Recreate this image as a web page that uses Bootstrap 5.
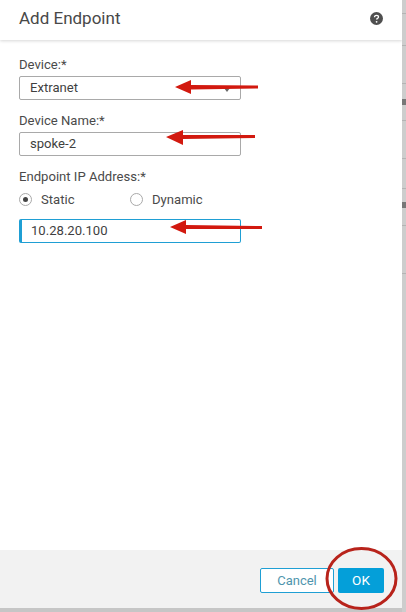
<!DOCTYPE html>
<html>
<head>
  <meta charset="UTF-8">
  <title>Add Endpoint</title>
  <link href="https://cdn.jsdelivr.net/npm/bootstrap@5.3.3/dist/css/bootstrap.min.css" rel="stylesheet">
  <script src="https://cdn.jsdelivr.net/npm/bootstrap@5.3.3/dist/js/bootstrap.bundle.min.js"></script>
  <style>
    html, body { height: 612px; overflow: hidden; }
    body { background: #fff; font-family: Roboto, "Liberation Sans", sans-serif; color: #4a4a4a; font-size: 13.1px; }
    .page-wrap { height: 612px; position: relative; }
    .dlg { width: 402px; height: 612px; background: #fff; }
    .side-strip { width: 4px; height: 612px; background: #cdcdcd; }
    .dlg-head { height: 40px; padding: 0 19px 4px; box-shadow: 0 1px 3px rgba(0,0,0,.16); }
    .dlg-title { font-size: 17px; color: #484848; font-weight: 400; margin: 0; }
    .dlg-body { padding: 16px 19px 0; }
    .fld-label { font-size: 13.1px; line-height: 17px; margin-bottom: 3px; color: #4a4a4a; }
    .fld-box { width: 222px; height: 24px; border: 1px solid #a9a9a9; border-radius: 2px; padding: 0 10px; line-height: 22px; font-size: 13.1px; color: #3f3f3f; background: #fff; position: relative; }
    .fld-caret { position: absolute; right: 10px; top: 11px; width: 0; height: 0; border-left: 3px solid transparent; border-right: 3px solid transparent; border-top: 4px solid #666; }
    .fld-focus { border-color: #1f9fd4; border-left: 3px solid #1f9fd4; padding-left: 9px; }
    .fld-gap { margin-bottom: 12px; }
    .radio-row { height: 24px; margin-bottom: 7px; }
    .radio-dot { width: 13px; height: 13px; border: 1px solid #a9a9a9; border-radius: 50%; background: #fff; display: inline-flex; align-items: center; justify-content: center; }
    .radio-dot i { width: 5px; height: 5px; background: #444; border-radius: 50%; }
    .radio-a { width: 111px; }
    .radio-opt { gap: 9px; }
    .dlg-foot { height: 58px; background: #f2f2f2; padding: 18px 18px 0 0; gap: 4px; }
    .foot-line { height: 4px; background: #c6c6c6; }
    .btn-cancel { width: 74px; height: 25px; padding: 0; border: 1px solid #1f9fd4; border-radius: 2px; background: #fff; color: #4f95ad; font-size: 13px; line-height: 22px; }
    .btn-ok { width: 46px; height: 25px; padding: 0; border: 0; border-radius: 2px; background: #049fd9; color: #fff; font-size: 13.5px; line-height: 25px; }
    .arrow-ov { position: absolute; left: 0; top: 0; pointer-events: none; }
  </style>
</head>
<body>
  <div class="page-wrap d-flex">
    <div class="dlg d-flex flex-column">
      <div class="dlg-head d-flex align-items-center justify-content-between">
        <h1 class="dlg-title">Add Endpoint</h1>
        <svg width="13" height="13" viewBox="0 0 13 13">
          <circle cx="6.5" cy="6.5" r="6.5" fill="#4f4f4f"/>
          <path d="M4.5 5.2c0-1.2.9-1.9 2-1.9s2 .7 2 1.7c0 1.4-1.9 1.3-1.9 2.6" fill="none" stroke="#fff" stroke-width="1.3"/>
          <circle cx="6.6" cy="9.8" r=".9" fill="#fff"/>
        </svg>
      </div>
      <div class="dlg-body flex-grow-1">
        <div class="fld-label">Device:*</div>
        <div class="fld-box fld-gap">Extranet<span class="fld-caret"></span></div>
        <div class="fld-label">Device Name:*</div>
        <div class="fld-box fld-gap">spoke-2</div>
        <div class="fld-label">Endpoint IP Address:*</div>
        <div class="radio-row d-flex align-items-center">
          <div class="radio-a radio-opt d-flex align-items-center"><span class="radio-dot"><i></i></span>Static</div>
          <div class="radio-opt d-flex align-items-center"><span class="radio-dot"></span>Dynamic</div>
        </div>
        <div class="fld-box fld-focus">10.28.20.100</div>
      </div>
      <div class="dlg-foot d-flex justify-content-end align-items-start">
        <button class="btn btn-cancel">Cancel</button>
        <button class="btn btn-ok">OK</button>
      </div>
      <div class="foot-line"></div>
    </div>
    <svg class="side-strip" viewBox="0 0 4 612">
      <g fill="#b4b4b4">
        <rect y="13" width="4" height="1"/><rect y="45" width="4" height="1"/><rect y="83" width="4" height="1"/>
        <rect y="120" width="4" height="1"/><rect y="158" width="4" height="1"/><rect y="188" width="4" height="1"/>
        <rect y="225" width="4" height="1"/><rect y="273" width="4" height="1"/>
      </g>
      <g fill="#777">
        <rect y="99" width="4" height="6"/><rect y="202" width="4" height="6"/>
      </g>
    </svg>
  </div>
  <svg class="arrow-ov" width="406" height="612" viewBox="0 0 406 612">
    <g fill="#d2190f">
      <path d="M175 87 L191 80 L191 85 L258 85.5 L258 88.5 L191 89.5 L191 94 Z"/>
      <path d="M166 137 L183 130 L183 135 L255 135 L255 138 L183 139 L183 145 Z"/>
      <path d="M170 227 L186 220 L186 225 L262 226 L262 229 L186 229 L186 234 Z"/>
    </g>
    <ellipse cx="361.5" cy="578.5" rx="34.5" ry="30" fill="none" stroke="#b8231b" stroke-width="3"/>
  </svg>
</body>
</html>
